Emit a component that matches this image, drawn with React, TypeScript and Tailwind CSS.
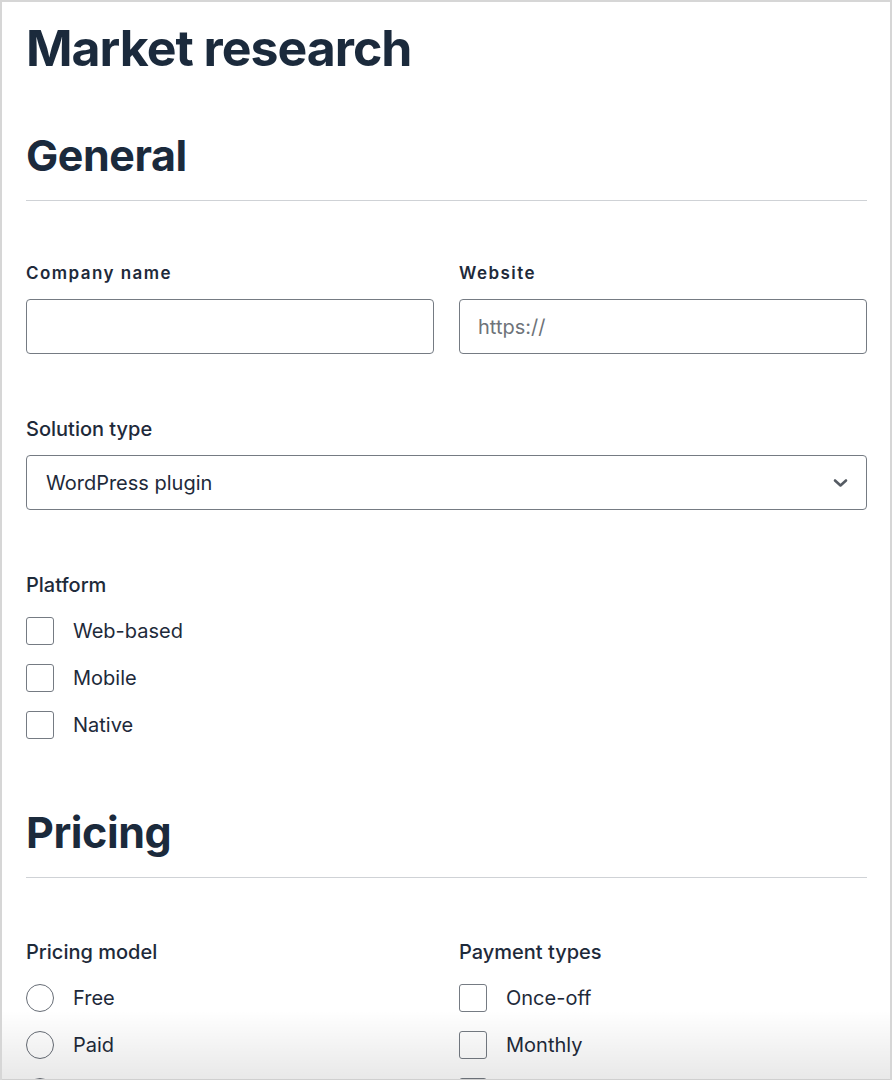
import React from "react";

const font = { fontFamily: "Inter, 'Liberation Sans', sans-serif" };

function Checkbox({ label }: { label: string }) {
  return (
    <label className="flex items-center h-[28px]">
      <span className="w-[28px] h-[28px] rounded-[3px] border-[1.5px] border-[#757b83] bg-white shrink-0" />
      <span className="ml-[19px] text-[20px] leading-[24px] text-[#1e2a3a]">{label}</span>
    </label>
  );
}

function Radio({ label }: { label: string }) {
  return (
    <label className="flex items-center h-[28px]">
      <span className="w-[28px] h-[28px] rounded-full border-[1.5px] border-[#676d76] bg-white shrink-0" />
      <span className="ml-[19px] text-[20px] leading-[24px] text-[#1e2a3a]">{label}</span>
    </label>
  );
}

export default function App() {
  return (
    <div
      className="relative w-[892px] h-[1080px] overflow-hidden bg-white border-x-2 border-t-2 border-[#d6d6d6] text-[#1b2a3c]"
      style={font}
    >
      <div className="pl-[24px] pr-[23px]">
        <h1 className="text-[50px] font-bold leading-none tracking-[-0.02em] mt-[21px]">Market research</h1>
        <h2 className="text-[43px] font-bold leading-none tracking-[-0.01em] mt-[61px]">General</h2>
        <div className="mt-[23px] h-px bg-[#cfd2d6]" />

        <div className="grid grid-cols-2 gap-x-[25px] mt-[62px]">
          <div>
            <div className="text-[17px] font-semibold tracking-[0.085em] leading-[20px] text-[#1e2a3a]">Company name</div>
            <div className="mt-[16px] h-[55px] rounded-[4px] border-[1.5px] border-[#757b83] bg-white" />
          </div>
          <div>
            <div className="text-[17px] font-semibold tracking-[0.085em] leading-[20px] text-[#1e2a3a]">Website</div>
            <div className="mt-[16px] h-[55px] rounded-[4px] border-[1.5px] border-[#757b83] bg-white flex items-center pl-[18px] text-[20px] text-[#6e7379]">
              https://
            </div>
          </div>
        </div>

        <div className="mt-[63px] text-[20px] font-medium leading-[24px] text-[#1e2a3a]">Solution type</div>
        <div className="mt-[14px] h-[55px] rounded-[4px] border-[1.5px] border-[#757b83] bg-white flex items-center justify-between pl-[19px] pr-[18px]">
          <span className="text-[20px] text-[#1e2a3a]">WordPress plugin</span>
          <svg width="15" height="10" viewBox="0 0 15 10" fill="none">
            <path d="M2 2.5l5.5 5 5.5-5" stroke="#555b63" strokeWidth="2.6" strokeLinecap="round" strokeLinejoin="round" />
          </svg>
        </div>

        <div className="mt-[63px] text-[20px] font-medium leading-[24px] text-[#1e2a3a]">Platform</div>
        <div className="mt-[20px] flex flex-col gap-[19px]">
          <Checkbox label="Web-based" />
          <Checkbox label="Mobile" />
          <Checkbox label="Native" />
        </div>

        <h2 className="text-[43px] font-bold leading-none tracking-[-0.01em] mt-[72px]">Pricing</h2>
        <div className="mt-[23px] h-px bg-[#cfd2d6]" />

        <div className="grid grid-cols-2 gap-x-[25px] mt-[62px]">
          <div>
            <div className="text-[20px] font-medium leading-[24px] text-[#1e2a3a]">Pricing model</div>
            <div className="mt-[20px] flex flex-col gap-[19px]">
              <Radio label="Free" />
              <Radio label="Paid" />
              <Radio label="Freemium" />
            </div>
          </div>
          <div>
            <div className="text-[20px] font-medium leading-[24px] text-[#1e2a3a]">Payment types</div>
            <div className="mt-[20px] flex flex-col gap-[19px]">
              <Checkbox label="Once-off" />
              <Checkbox label="Monthly" />
              <Checkbox label="Annually" />
            </div>
          </div>
        </div>
      </div>

      <div className="pointer-events-none absolute left-0 right-0 bottom-0 h-[70px] bg-gradient-to-b from-black/0 to-black/[0.09] border-b border-[#cfcfcf]" />
    </div>
  );
}
